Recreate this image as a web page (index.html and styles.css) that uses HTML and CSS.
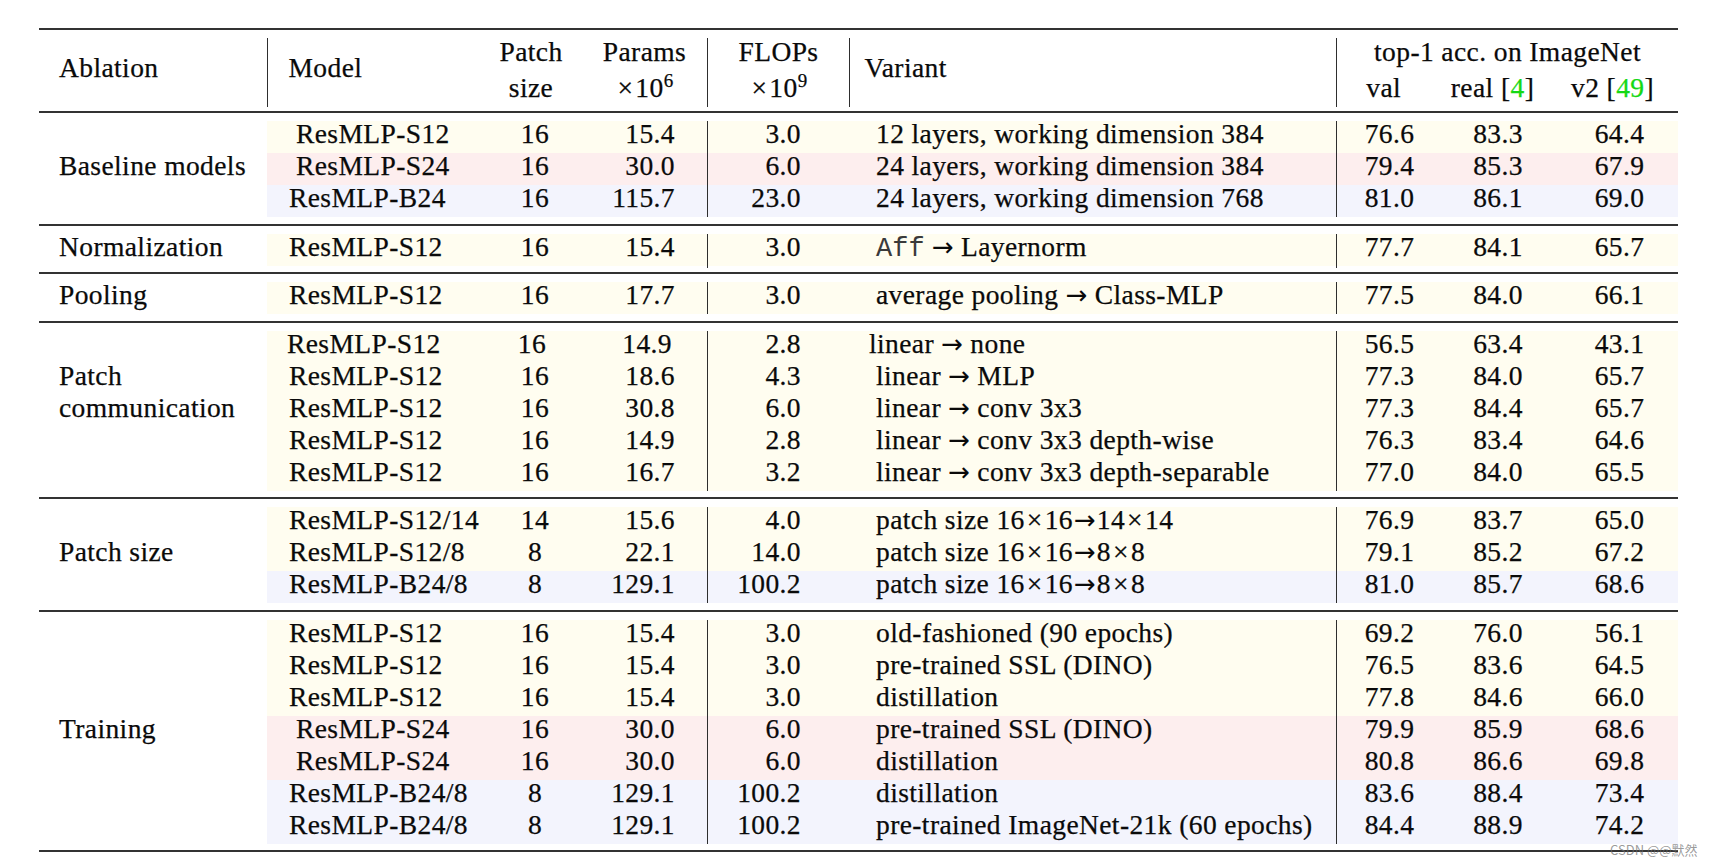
FILE: index.html
```html
<!DOCTYPE html>
<html>
<head>
<meta charset="utf-8">
<link rel="stylesheet" href="styles.css">
</head>
<body>
<div class="table">
  <div class="head">
    <div class="hc h-abl"><div class="hin single">Ablation</div></div>
    <div class="hc h-model vl"><div class="hin single">Model</div></div>
    <div class="hc h-patch"><div class="hin"><span>Patch</span><span>size</span></div></div>
    <div class="hc h-params"><div class="hin"><span>Params</span><span><span class="x">×</span>10<sup>6</sup></span></div></div>
    <div class="hc h-flops vl"><div class="hin"><span>FLOPs</span><span><span class="x">×</span>10<sup>9</sup></span></div></div>
    <div class="hc h-variant vl"><div class="hin single">Variant</div></div>
    <div class="hc h-top vl"><div class="hin"><span>top-1 acc. on ImageNet</span><span class="sub"><span>val</span><span>real [<span class="cite">4</span>]</span><span class="s-v2">v2 [<span class="cite">49</span>]</span></span></div></div>
  </div>

  <div class="group">
    <div class="abl">Baseline models</div>
    <div class="rows">
      <div class="row y"><div class="c model in">ResMLP-S12</div><div class="c patch">16</div><div class="c params">15.4</div><div class="c flops">3.0</div><div class="c variant">12 layers, working dimension 384</div><div class="c val">76.6</div><div class="c real">83.3</div><div class="c v2">64.4</div></div>
      <div class="row p"><div class="c model in">ResMLP-S24</div><div class="c patch">16</div><div class="c params">30.0</div><div class="c flops">6.0</div><div class="c variant">24 layers, working dimension 384</div><div class="c val">79.4</div><div class="c real">85.3</div><div class="c v2">67.9</div></div>
      <div class="row b"><div class="c model">ResMLP-B24</div><div class="c patch">16</div><div class="c params">115.7</div><div class="c flops">23.0</div><div class="c variant">24 layers, working dimension 768</div><div class="c val">81.0</div><div class="c real">86.1</div><div class="c v2">69.0</div></div>
    </div>
  </div>

  <div class="group">
    <div class="abl">Normalization</div>
    <div class="rows">
      <div class="row y"><div class="c model">ResMLP-S12</div><div class="c patch">16</div><div class="c params">15.4</div><div class="c flops">3.0</div><div class="c variant"><span class="tt">Aff</span> <span class="ar">→</span> Layernorm</div><div class="c val">77.7</div><div class="c real">84.1</div><div class="c v2">65.7</div></div>
    </div>
  </div>

  <div class="group">
    <div class="abl">Pooling</div>
    <div class="rows">
      <div class="row y"><div class="c model">ResMLP-S12</div><div class="c patch">16</div><div class="c params">17.7</div><div class="c flops">3.0</div><div class="c variant">average pooling <span class="ar">→</span> Class-MLP</div><div class="c val">77.5</div><div class="c real">84.0</div><div class="c v2">66.1</div></div>
    </div>
  </div>

  <div class="group">
    <div class="abl up">Patch<br>communication</div>
    <div class="rows">
      <div class="row y shift"><div class="c model">ResMLP-S12</div><div class="c patch">16</div><div class="c params">14.9</div><div class="c flops">2.8</div><div class="c variant">linear <span class="ar">→</span> none</div><div class="c val">56.5</div><div class="c real">63.4</div><div class="c v2">43.1</div></div>
      <div class="row y"><div class="c model">ResMLP-S12</div><div class="c patch">16</div><div class="c params">18.6</div><div class="c flops">4.3</div><div class="c variant">linear <span class="ar">→</span> MLP</div><div class="c val">77.3</div><div class="c real">84.0</div><div class="c v2">65.7</div></div>
      <div class="row y"><div class="c model">ResMLP-S12</div><div class="c patch">16</div><div class="c params">30.8</div><div class="c flops">6.0</div><div class="c variant">linear <span class="ar">→</span> conv 3x3</div><div class="c val">77.3</div><div class="c real">84.4</div><div class="c v2">65.7</div></div>
      <div class="row y"><div class="c model">ResMLP-S12</div><div class="c patch">16</div><div class="c params">14.9</div><div class="c flops">2.8</div><div class="c variant">linear <span class="ar">→</span> conv 3x3 depth-wise</div><div class="c val">76.3</div><div class="c real">83.4</div><div class="c v2">64.6</div></div>
      <div class="row y"><div class="c model">ResMLP-S12</div><div class="c patch">16</div><div class="c params">16.7</div><div class="c flops">3.2</div><div class="c variant">linear <span class="ar">→</span> conv 3x3 depth-separable</div><div class="c val">77.0</div><div class="c real">84.0</div><div class="c v2">65.5</div></div>
    </div>
  </div>

  <div class="group">
    <div class="abl">Patch size</div>
    <div class="rows">
      <div class="row y"><div class="c model">ResMLP-S12/14</div><div class="c patch">14</div><div class="c params">15.6</div><div class="c flops">4.0</div><div class="c variant">patch size 16<span class="x">×</span>16<span class="ar t">→</span>14<span class="x">×</span>14</div><div class="c val">76.9</div><div class="c real">83.7</div><div class="c v2">65.0</div></div>
      <div class="row y"><div class="c model">ResMLP-S12/8</div><div class="c patch">8</div><div class="c params">22.1</div><div class="c flops">14.0</div><div class="c variant">patch size 16<span class="x">×</span>16<span class="ar t">→</span>8<span class="x">×</span>8</div><div class="c val">79.1</div><div class="c real">85.2</div><div class="c v2">67.2</div></div>
      <div class="row b"><div class="c model">ResMLP-B24/8</div><div class="c patch">8</div><div class="c params">129.1</div><div class="c flops">100.2</div><div class="c variant">patch size 16<span class="x">×</span>16<span class="ar t">→</span>8<span class="x">×</span>8</div><div class="c val">81.0</div><div class="c real">85.7</div><div class="c v2">68.6</div></div>
    </div>
  </div>

  <div class="group">
    <div class="abl">Training</div>
    <div class="rows">
      <div class="row y"><div class="c model">ResMLP-S12</div><div class="c patch">16</div><div class="c params">15.4</div><div class="c flops">3.0</div><div class="c variant">old-fashioned (90 epochs)</div><div class="c val">69.2</div><div class="c real">76.0</div><div class="c v2">56.1</div></div>
      <div class="row y"><div class="c model">ResMLP-S12</div><div class="c patch">16</div><div class="c params">15.4</div><div class="c flops">3.0</div><div class="c variant">pre-trained SSL (DINO)</div><div class="c val">76.5</div><div class="c real">83.6</div><div class="c v2">64.5</div></div>
      <div class="row y"><div class="c model">ResMLP-S12</div><div class="c patch">16</div><div class="c params">15.4</div><div class="c flops">3.0</div><div class="c variant">distillation</div><div class="c val">77.8</div><div class="c real">84.6</div><div class="c v2">66.0</div></div>
      <div class="row p"><div class="c model in">ResMLP-S24</div><div class="c patch">16</div><div class="c params">30.0</div><div class="c flops">6.0</div><div class="c variant">pre-trained SSL (DINO)</div><div class="c val">79.9</div><div class="c real">85.9</div><div class="c v2">68.6</div></div>
      <div class="row p"><div class="c model in">ResMLP-S24</div><div class="c patch">16</div><div class="c params">30.0</div><div class="c flops">6.0</div><div class="c variant">distillation</div><div class="c val">80.8</div><div class="c real">86.6</div><div class="c v2">69.8</div></div>
      <div class="row b"><div class="c model">ResMLP-B24/8</div><div class="c patch">8</div><div class="c params">129.1</div><div class="c flops">100.2</div><div class="c variant">distillation</div><div class="c val">83.6</div><div class="c real">88.4</div><div class="c v2">73.4</div></div>
      <div class="row b"><div class="c model">ResMLP-B24/8</div><div class="c patch">8</div><div class="c params">129.1</div><div class="c flops">100.2</div><div class="c variant">pre-trained ImageNet-21k (60 epochs)</div><div class="c val">84.4</div><div class="c real">88.9</div><div class="c v2">74.2</div></div>
    </div>
  </div>
</div>
<div class="watermark">CSDN @@默然</div>
</body>
</html>
```

FILE: styles.css
```css
* { box-sizing: border-box; }

html, body {
  margin: 0;
  padding: 0;
  background: #ffffff;
}

body {
  width: 1709px;
  height: 866px;
  overflow: hidden;
  position: relative;
  font-family: "Liberation Serif", "Times New Roman", serif;
  font-size: 27.5px;
  letter-spacing: 0.4px;
  color: #0a0a0a;
  -webkit-text-stroke: 0.25px #0a0a0a;
}

.table {
  margin: 28px 0 0 39px;
  width: 1639px;
  border-top: 2px solid #333333;
}

/* ---------- header ---------- */
.head {
  display: grid;
  grid-template-columns: 228px 203px 130px 107px 142px 487px 342px;
  height: 83px;
  border-bottom: 2px solid #333333;
}

.hc {
  margin: 8px 0 4px;
  min-width: 0;
}

.vl { border-left: 1.5px solid #2e2e2e; }

.hin {
  margin-top: -4px;
  height: 71px;
  display: flex;
  flex-direction: column;
  justify-content: center;
  line-height: 35.5px;
  white-space: nowrap;
}
.hin.single { padding-bottom: 4px; }

.h-abl .hin { padding-left: 20px; }
.h-model .hin { padding-left: 20.5px; }
.h-patch .hin { align-items: center; padding-right: 8px; }
.h-params .hin { align-items: center; padding-right: 18px; }
.h-flops .hin { align-items: center; }
.h-variant .hin { padding-left: 14.5px; }
.h-top .hin { align-items: center; }

.sub {
  display: grid;
  grid-template-columns: 93.5px 124px 123px;
  width: 100%;
  text-align: center;
}
.s-v2 { padding-right: 7px; }

.cite {
  color: #14d814;
  -webkit-text-stroke: 0.25px #14d814;
}

sup {
  font-size: 19px;
  line-height: 0;
  vertical-align: 10px;
}

.x { margin: 0 2px; }

.ar {
  font-family: "DejaVu Sans", sans-serif;
  font-size: 26px;
  line-height: 0;
  letter-spacing: 0;
  font-weight: normal;
  -webkit-text-stroke: 0;
}
.ar.t { margin: 0 1px; }

/* ---------- body ---------- */
.group {
  display: grid;
  grid-template-columns: 228px 1411px;
  padding: 8px 0 6.5px;
  border-bottom: 2px solid #333333;
}

.abl {
  display: flex;
  align-items: center;
  padding-left: 20px;
  padding-bottom: 5.75px;
  line-height: 26.25px;
  white-space: nowrap;
}
.abl.up {
  line-height: 32px;
  padding-bottom: 37.75px;
}

.rows {
  display: flex;
  flex-direction: column;
}

.row {
  display: grid;
  grid-template-columns: 203px 130px 107px 142px 487px 106px 112px 124px;
  height: 32px;
}

.row.y { background: #fffdf0; }
.row.p { background: #fdeeee; }
.row.b { background: #f3f4fd; }

.c {
  line-height: 26.25px;
  padding-bottom: 5.75px;
  white-space: nowrap;
  min-width: 0;
}

.model { padding-left: 22px; }
.model.in { padding-left: 29px; }
.patch { text-align: center; }
.params { text-align: right; padding-right: 32px; }
.flops {
  text-align: right;
  padding-right: 48px;
  border-left: 1.5px solid #2e2e2e;
}
.variant { padding-left: 27px; }
.val {
  text-align: center;
  border-left: 1.5px solid #2e2e2e;
}
.real { text-align: center; }
.v2 { text-align: center; padding-left: 7px; }

.shift .model { padding-left: 20px; }
.shift .patch { padding-right: 6px; }
.shift .params { padding-right: 35px; }
.shift .variant { padding-left: 20px; }

.tt {
  font-family: "Liberation Mono", "Courier New", monospace;
  font-size: 27px;
  letter-spacing: 0;
  color: #3a3a3a;
  -webkit-text-stroke: 0;
}

.watermark {
  position: absolute;
  left: 1610px;
  top: 841px;
  font-family: "Noto Sans CJK SC", "Noto Sans", sans-serif;
  font-size: 13px;
  line-height: 18px;
  letter-spacing: 0;
  color: rgba(110, 110, 110, 0.7);
  -webkit-text-stroke: 0;
  white-space: nowrap;
}
```
